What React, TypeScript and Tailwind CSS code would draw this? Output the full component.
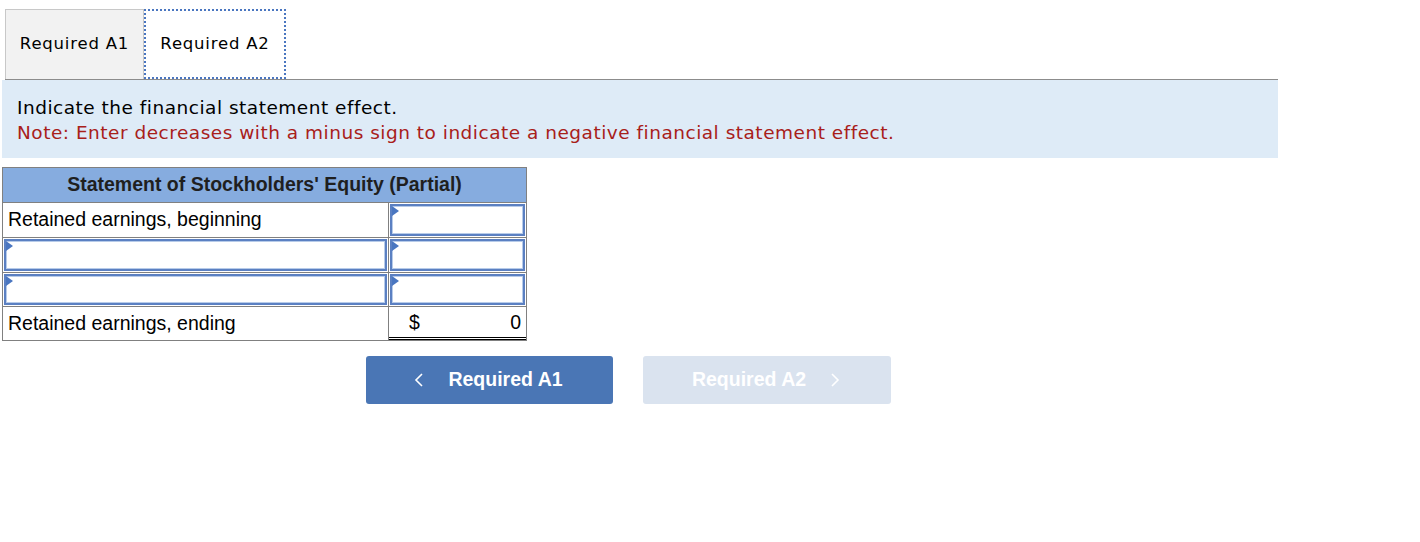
import React from 'react'

function Marker() {
    return <span className="absolute left-0 top-0 w-0 h-0 border-t-[5px] border-b-[5px] border-l-[7px] border-t-transparent border-b-transparent border-l-[#4a76c0]"></span>
}

function InputCell() {
    return (
        <div className="relative h-full border-2 border-[#5b80c2] bg-white">
            <div className="h-full border border-[#b7cbe9]"></div>
            <Marker />
        </div>
    )
}

export default function App() {
    const sans = { fontFamily: '"DejaVu Sans", Verdana, sans-serif' }
    const arial = { fontFamily: '"Liberation Sans", Arial, sans-serif' }
    return (
        <div className="w-[1420px] h-[542px] bg-white">
            <div className="pl-[5px] pt-[9px]" style={sans}>
                <div className="flex w-[1273px] border-b border-[#8c8c8c]">
                    <div className="w-[139px] h-[70px] bg-[#f2f2f2] border border-b-0 border-[#c8c8c8] flex items-center justify-center text-[16.5px] tracking-[0.8px] text-black">Required A1</div>
                    <div className="w-[142px] h-[70px] bg-white border-2 border-dotted border-[#4a76c0] flex items-center justify-center text-[16.5px] tracking-[0.8px] text-black -mb-px">Required A2</div>
                </div>
            </div>
            <div className="ml-[2px] w-[1276px] h-[78px] bg-[#deebf7] pl-[15px] pt-[15px] text-[18.5px] leading-[25px] tracking-[0.5px]" style={sans}>
                <div className="text-black">Indicate the financial statement effect.</div>
                <div className="text-[#a8201a]">Note: Enter decreases with a minus sign to indicate a negative financial statement effect.</div>
            </div>
            <div className="ml-[2px] mt-[9px] w-[525px] border border-[#808080]" style={arial}>
                <div className="h-[34px] bg-[#86acdf] flex items-center justify-center text-[19.5px] font-bold text-[#1f1f1f]">Statement of Stockholders' Equity (Partial)</div>
                <div className="grid grid-cols-[386px_1fr] text-[19.5px] text-black">
                    <div className="h-[35px] border-t border-r border-[#808080] flex items-center pl-[5px]">Retained earnings, beginning</div>
                    <div className="h-[35px] border-t border-[#808080] p-px"><InputCell /></div>
                    <div className="h-[35px] border-t border-r border-[#808080] p-px"><InputCell /></div>
                    <div className="h-[35px] border-t border-[#808080] p-px"><InputCell /></div>
                    <div className="h-[34px] border-t border-r border-[#808080] p-px"><InputCell /></div>
                    <div className="h-[34px] border-t border-[#808080] p-px"><InputCell /></div>
                    <div className="h-[34px] border-t border-r border-[#808080] flex items-center pl-[5px]">Retained earnings, ending</div>
                    <div className="h-[34px] border-t border-[#808080] flex items-end">
                        <div className="w-full h-[32px] border-b-[3px] border-double border-black flex items-center justify-between pl-[20px] pr-[5px]">
                            <span>$</span>
                            <span>0</span>
                        </div>
                    </div>
                </div>
            </div>
            <div className="flex gap-[30px] ml-[366px] mt-[15px]" style={arial}>
                <button className="w-[247px] h-[48px] rounded-[3px] bg-[#4a76b5] text-white text-[19.5px] font-bold flex items-center justify-center gap-[24px] pr-[2px]">
                    <svg width="10" height="16" viewBox="0 0 10 16" fill="none" stroke="white" strokeWidth="1.6"><path d="M8 2 L2 8 L8 14" /></svg>
                    <span>Required A1</span>
                </button>
                <button className="w-[248px] h-[48px] rounded-[3px] bg-[#dae3ef] text-white text-[19.5px] font-bold flex items-center justify-center gap-[24px] pr-[2px]">
                    <span>Required A2</span>
                    <svg width="10" height="16" viewBox="0 0 10 16" fill="none" stroke="white" strokeWidth="1.6"><path d="M2 2 L8 8 L2 14" /></svg>
                </button>
            </div>
        </div>
    )
}
